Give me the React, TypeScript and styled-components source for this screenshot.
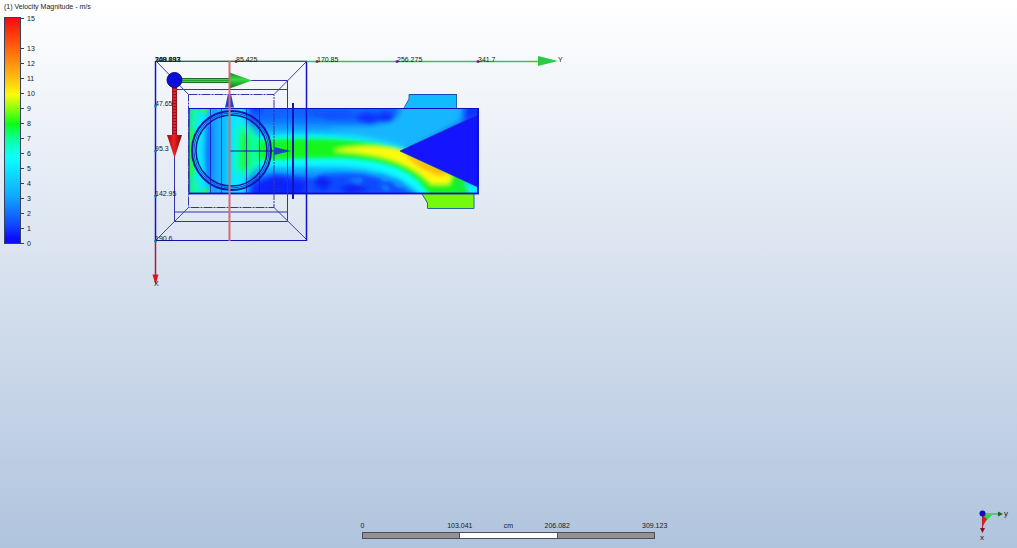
import React from "react";
import styled, { createGlobalStyle } from "styled-components";

const GlobalStyle = createGlobalStyle`
  * { box-sizing: border-box; }
  body {
    margin: 0;
    color: #161a24;
    font: 7px/8px "Liberation Sans", Arial, sans-serif;
  }
`;

const Viewer = styled.main`
  display: flex;
  flex-direction: column;
  justify-content: space-between;
  min-height: 100vh;
  background: linear-gradient(#ffffff, #b0c4de);
`;

const Workspace = styled.section`
  display: flex;
  align-items: flex-start;
`;

const Legend = styled.aside`
  flex: 0 0 150px;
  padding: 3px 0 0 4px;
`;

const LegendTitle = styled.h1`
  margin: 0;
  font: inherit;
`;

const LegendScale = styled.div`
  display: flex;
  align-items: flex-start;
`;

const ColorBar = styled.div`
  width: 17px;
  height: 227px;
  margin-top: 6px;
  border: 1px solid #33405e;
  background: linear-gradient(
    #f20c0c 0%, #ff5a0c 12%, #ff9010 20%, #ffc012 27%, #fffa0c 34%,
    #90ff0c 40%, #0cff14 47%, #0cffa0 54%, #0cffff 62%, #10aaff 79%,
    #1046ff 92%, #0c0cff 98%
  );
`;

const Ticks = styled.ul`
  margin: 0;
  padding: 0;
  list-style: none;
`;

const Tick = styled.li`
  display: flex;
  align-items: center;
  gap: 3px;
  height: 15px;
  &::before {
    content: "";
    width: 3px;
    height: 1px;
    background: #33405e;
  }
`;

const TickGap = styled.li`
  height: 15px;
`;

const Scene = styled.svg`
  flex: 0 1 420px;
  min-width: 0;
  margin-top: 50px;
  font: 7px "Liberation Sans", Arial, sans-serif;
`;

const BottomBar = styled.footer`
  display: grid;
  grid-template-columns: 1fr auto 1fr;
  align-items: end;
`;

const Ruler = styled.div`
  grid-column: 2;
  width: 341px;
  padding-bottom: 9px;
`;

const RulerLabels = styled.div`
  display: grid;
  grid-template-columns: repeat(7, 1fr);
  justify-items: center;
`;

const RulerLabel = styled.span<{ $column: number }>`
  grid-column: ${(p) => p.$column};
`;

const RulerBar = styled.div`
  display: flex;
  height: 7px;
  margin: 2px 24px 0;
  border: 1px solid #4a4f5a;
`;

const Segment = styled.div<{ $filled?: boolean }>`
  flex: 1;
  background: ${(p) => (p.$filled ? "#929292" : "#ffffff")};
  & + & {
    border-left: 1px solid #4a4f5a;
  }
`;

const Triad = styled.svg`
  justify-self: end;
  font: 8px "Liberation Sans", Arial, sans-serif;
`;

const legendValues = [13, 12, 11, 10, 9, 8, 7, 6, 5, 4, 3, 2, 1, 0];

const rulerMarks = [
  { column: 1, text: "0" },
  { column: 3, text: "103.041" },
  { column: 4, text: "cm" },
  { column: 5, text: "206.082" },
  { column: 7, text: "309.123" },
];

const yMarks = [
  { x: 236, text: "85.425" },
  { x: 317, text: "170.85" },
  { x: 397, text: "256.275" },
  { x: 478, text: "341.7" },
];

const xMarks = [
  { y: 106, text: "47.65" },
  { y: 151, text: "95.3" },
  { y: 196, text: "142.95" },
  { y: 241, text: "190.6" },
];

const originLabels = ["268.033", "149.197", "309.893"];

function FlowField() {
  return (
    <g>
      <path d="M404 109 L409 99 V94 H457 V109Z" fill="#12baff" />
      <path d="M422 193 L427 203 V208 H474 V193Z" fill="#74fa0c" />
      <g clipPath="url(#duct)">
        <rect x="189" y="108" width="290" height="86" fill="#1260ff" />
        <g filter="url(#soft6)">
          <path d="M240 126 C300 122 350 122 398 138 L470 195 H424 C390 168 330 178 240 178Z" fill="#0eaeff" />
        </g>
        <g filter="url(#soft3)">
          <path d="M402 100 H461 L464 120 L402 154 C375 142 345 134 325 128 C350 126 384 128 398 115Z" fill="#14b6ff" />
          <path d="M250 138 C290 131 350 132 398 147 L482 190 V200 H424 C408 182 388 170 345 167 C315 166 285 168 250 166Z" fill="#0cffff" />
          <path d="M310 186 L325 175 L360 173 L390 181 L412 194 L310 197Z" fill="#0c48ff" />
          <path d="M252 184 L275 174 L310 180 L304 198 H250Z" fill="#0c28ff" />
          <path d="M464 104 H482 V116 L461 123Z" fill="#0c30ff" />
        </g>
        <g filter="url(#soft2)">
          <path d="M356 116 L366 113 L376 115 L386 112 L394 115 L390 121 L378 120 L370 123 L358 120Z" fill="#0c30ff" />
          <path d="M306 112 H346 L356 117 L330 119Z" fill="#0e50ff" />
          <path d="M248 107 H264 L256 114Z" fill="#0c38ff" />
          <path d="M312 182 L322 176 L332 182 L324 190Z M340 188 L356 184 L368 190 L350 194Z M262 184 L276 180 L290 186 L270 192Z" fill="#0a22f4" />
          <path d="M378 174 L390 178 L384 182Z M392 178 L404 184 L398 188Z M346 179 L364 178 L360 183Z M378 184 L392 188 L386 191Z" fill="#1496ff" />
          <path d="M250 142 C290 137 355 137 400 149 L464 178 L470 197 H430 C420 176 398 160 345 158 C310 157 280 161 250 159Z" fill="#14f61c" />
          <path d="M335 150 C362 145 386 145 402 150 L452 175 L449 184 L431 184 C415 167 391 154 335 151Z" fill="#fffa0c" />
          <path d="M403 152 L450 174 L439 176 C424 171 411 163 403 152Z" fill="#ffb80c" />
          <path d="M453 174 L464 181 L471 197 H452Z" fill="#14f030" />
          <path d="M464 181 L480 188 V196 H476Z" fill="#0cecff" />
        </g>
        <g filter="url(#soft3)">
          <rect x="187" y="104" width="60" height="94" fill="#0ce8ff" />
          <path d="M187 104 H200 L196 120 Q190 150 196 180 L202 197 H187Z" fill="#14f890" />
          <path d="M209 106 H219 V198 H209 L204 151Z" fill="#129aff" />
          <path d="M220 108 H228 V198 H220Z" fill="#10b4ff" />
          <path d="M237 128 L248 122 L260 140 V162 L248 178 L234 170Z" fill="#0cffa0" />
        </g>
        <g filter="url(#soft2)">
          <path d="M198 106 H210 L204 114Z M198 196 L208 188 L210 197Z" fill="#30ff18" />
          <path d="M187 122 L194 134 V171 L187 182Z" fill="#22ff30" />
          <path d="M242 132 L249 138 V165 L242 170Z" fill="#20f820" />
          <path d="M207 120 L211 126 V176 L207 182Z" fill="#1060ff" />
        </g>
      </g>
      <path d="M400 151 L478 115 V187Z" fill="#1414ff" />
      <path d="M478 115 L400 151 L478 187" fill="none" stroke="#1a2ca8" strokeWidth="1" strokeOpacity=".7" />
    </g>
  );
}

function Model() {
  return (
    <Scene viewBox="150 50 420 240" width="420" height="240" role="img" aria-label="Velocity magnitude on the duct section">
      <defs>
        <clipPath id="duct"><rect x="189" y="108" width="290" height="86" /></clipPath>
        <filter id="soft2" x="-30%" y="-30%" width="160%" height="160%"><feGaussianBlur stdDeviation="2" /></filter>
        <filter id="soft3" x="-30%" y="-30%" width="160%" height="160%"><feGaussianBlur stdDeviation="3" /></filter>
        <filter id="soft6" x="-30%" y="-30%" width="160%" height="160%"><feGaussianBlur stdDeviation="6" /></filter>
        <linearGradient id="greenCone" x1="0" y1="0" x2="0" y2="1">
          <stop offset="0" stopColor="#148c20" /><stop offset=".45" stopColor="#34dc44" /><stop offset="1" stopColor="#107018" />
        </linearGradient>
        <linearGradient id="redCone">
          <stop offset="0" stopColor="#8c0c14" /><stop offset=".45" stopColor="#f42020" /><stop offset="1" stopColor="#700810" />
        </linearGradient>
      </defs>

      <FlowField />

      <g fill="none" stroke="#1414b4" strokeWidth="1">
        <path d="M404 108 L409 99 V94.5 H456.5 V108 M422 194 L427.5 203 V208.5 H474 V194" stroke="#2068a8" />
        <path d="M409 94.5 H457" stroke="#1c48b0" />
        <rect x="189" y="108.5" width="289" height="85" stroke="#0c0cc8" />
        <path d="M189 193.5 H479 M478 108 V194" stroke="#0c0cc8" strokeWidth="2" strokeOpacity=".8" />
        <path d="M210.5 109 V193 M221.5 109 V193 M246.5 109 V193 M259.5 109 V193" strokeOpacity=".75" />
        <circle cx="231.5" cy="150.5" r="39.5" strokeWidth="2" />
        <circle cx="231.5" cy="150.5" r="37.5" stroke="#184cc0" />
        <circle cx="231.5" cy="150.5" r="35.5" strokeWidth="1.5" />
        <path d="M174.5 80.5 H287.5 V221.5 H174.5Z M174.5 89.5 H287.5 M174.5 212 H287.5" stroke="#3434a8" />
        <path d="M188.5 94.5 H274 V207.5 H188.5Z" stroke="#3434a8" strokeDasharray="9 1 2 1" />
        <path d="M156 61 L188.5 94.5 M307 61 L274 94.5 M156 240 L188.5 207.5 M307 240 L274 207.5" stroke="#4040b0" />
        <path d="M156 61.5 H307 M156 240.5 H307" />
        <path d="M155.5 61 V241 M306.5 61 V241" stroke="#1414c8" strokeWidth="1.5" />
        <path d="M293 103 V199" strokeWidth="2" />
        <path d="M229.5 151 H276" />
      </g>

      <path d="M225 107.5 L228 94 H231 L234 107.5Z M274 147 L291 151 L274 155Z" fill="#2044c8" />
      <path d="M307 61.5 H539" stroke="#34c850" strokeWidth="1.5" />
      <path d="M156 61 H307" stroke="#609078" strokeWidth="1" />
      <path d="M538 56 L558 61 L538 66Z" fill="#28cc44" />
      <path d="M155.5 241 V276" stroke="#b01838" strokeWidth="1.5" />
      <path d="M152.5 274.5 H158.5 L155.5 285Z" fill="#e01420" />

      <path d="M180 80.5 H230" stroke="#187020" strokeWidth="5" />
      <path d="M180 80.5 H230" stroke="#38d840" strokeWidth="3" />
      <path d="M180 80.5 H230" stroke="#20a030" strokeWidth="1" />
      <path d="M229.5 72.5 L252 80.5 L229.5 88.5Z" fill="url(#greenCone)" />
      <path d="M229.5 61 V241" stroke="#d86878" strokeWidth="2" />
      <path d="M174.5 86 V137" stroke="#941424" strokeWidth="5" />
      <path d="M174.5 86 V137" stroke="#dc2430" strokeWidth="3" strokeDasharray="2 1" />
      <path d="M167 135 H182 L174.5 158Z" fill="url(#redCone)" />
      <circle cx="174.5" cy="80" r="7.5" fill="#0c0cdc" stroke="#101060" strokeWidth="1" />

      <g fill="#783088">
        {yMarks.map((m) => <circle key={m.text} cx={m.x} cy="61.5" r="1.5" />)}
      </g>
      <g fill="#2080d0">
        {xMarks.map((m) => <circle key={m.text} cx="155.5" cy={m.y} r="1.5" />)}
      </g>
      <g fill="#161a24">
        {yMarks.map((m) => <text key={m.text} x={m.x} y="62">{m.text}</text>)}
        {xMarks.map((m) => <text key={m.text} x="155" y={m.y}>{m.text}</text>)}
        {originLabels.map((label) => <text key={label} x="155" y="62">{label}</text>)}
        <text x="558" y="62">Y</text>
        <text x="154" y="286">X</text>
      </g>
    </Scene>
  );
}

export default function App() {
  return (
    <Viewer>
      <GlobalStyle />
      <Workspace>
        <Legend>
          <LegendTitle>(1) Velocity Magnitude - m/s</LegendTitle>
          <LegendScale>
            <ColorBar />
            <Ticks>
              <Tick>15</Tick>
              <TickGap />
              {legendValues.map((v) => <Tick key={v}>{v}</Tick>)}
            </Ticks>
          </LegendScale>
        </Legend>
        <Model />
      </Workspace>
      <BottomBar>
        <Ruler>
          <RulerLabels>
            {rulerMarks.map((m) => <RulerLabel key={m.text} $column={m.column}>{m.text}</RulerLabel>)}
          </RulerLabels>
          <RulerBar>
            <Segment $filled />
            <Segment />
            <Segment $filled />
          </RulerBar>
        </Ruler>
        <Triad viewBox="0 0 50 48" width="50" height="48" role="img" aria-label="Axis orientation">
          <path d="M17 15 H25 L17 23Z" fill="#20e030" />
          <path d="M15 15 L20 19 L16 26Z" fill="#f01818" />
          <path d="M15.5 14 H32" stroke="#20b030" />
          <path d="M15.5 14 V29" stroke="#c01828" />
          <path d="M31 11.5 L36 14 L31 16.5Z" fill="#186828" />
          <path d="M13 28 H18 L15.5 33Z" fill="#801020" />
          <circle cx="15.5" cy="13.5" r="3" fill="#1010b8" />
          <text x="37" y="16" fill="#161a24">y</text>
          <text x="13" y="40" fill="#161a24">x</text>
        </Triad>
      </BottomBar>
    </Viewer>
  );
}
